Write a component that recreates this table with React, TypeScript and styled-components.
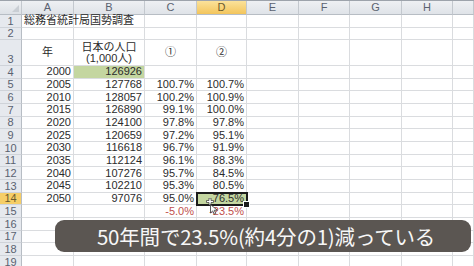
import React from "react";
import styled, {createGlobalStyle} from "styled-components";

const GlobalStyle = createGlobalStyle`
  html, body {
    margin: 0;
    padding: 0;
    background: #ffffff;
  }
  body {
    width: 474px;
    height: 266px;
    overflow: hidden;
    font-family: "Liberation Sans", "Noto Sans CJK JP", sans-serif;
  }
`

type CellData = {
    text?: React.ReactNode
    align?: 'left' | 'right' | 'center'
    fill?: string
    color?: string
    selected?: boolean
    spill?: boolean
}

const columns = ['A', 'B', 'C', 'D', 'E', 'F', 'G', 'H', '']

const data: [string, string, string, string][] = [
    ['2005', '127768', '100.7%', '100.7%'],
    ['2010', '128057', '100.2%', '100.9%'],
    ['2015', '126890', '99.1%', '100.0%'],
    ['2020', '124100', '97.8%', '97.8%'],
    ['2025', '120659', '97.2%', '95.1%'],
    ['2030', '116618', '96.7%', '91.9%'],
    ['2035', '112124', '96.1%', '88.3%'],
    ['2040', '107276', '95.7%', '84.5%'],
    ['2045', '102210', '95.3%', '80.5%'],
]

const buildRows = (): CellData[][] => {
    const rows: CellData[][] = []
    rows.push([{text: '総務省統計局国勢調査', align: 'left', spill: true}])
    rows.push([])
    rows.push([
        {text: '年', align: 'center'},
        {text: <>日本の人口<br/>(1,000人)</>, align: 'center'},
        {text: '①', align: 'center'},
        {text: '②', align: 'center'},
    ])
    rows.push([{text: '2000', align: 'right'}, {text: '126926', align: 'right', fill: '#c4d6a0'}])
    data.forEach(r => {
        rows.push(r.map(t => ({text: t, align: 'right'})))
    })
    rows.push([
        {text: '2050', align: 'right'},
        {text: '97076', align: 'right'},
        {text: '95.0%', align: 'right'},
        {text: '76.5%', align: 'right', fill: '#c4d6a0', selected: true},
    ])
    rows.push([
        {},
        {},
        {text: '-5.0%', align: 'right', color: '#c0504d'},
        {text: '-23.5%', align: 'right', color: '#c0504d'},
    ])
    for (let i = 16; i <= 19; i++) rows.push([])
    return rows
}

// excel cell cursor (white cross) with a small arrow
const Cursor = () => (
    <CursorWrap>
        <svg width="12" height="17" viewBox="0 0 12 17">
            <path d="M3 0h2v2.5h2.5v2H5V7H3V4.5H0.5v-2H3z" fill="#fff" stroke="#333" strokeWidth="0.7"/>
            <path d="M4.5 6.5v8.5l2.2-2.1 1.6 3.3 1.5-0.7-1.6-3.2 3.1-0.1z" fill="#fff" stroke="#333" strokeWidth="0.8"/>
        </svg>
    </CursorWrap>
)

export default function App() {
    const rows = buildRows()
    return (
        <Screen>
            <GlobalStyle/>
            <Sheet>
                <Corner/>
                {columns.map((c, i) => (
                    <ColHeader key={'h' + i} $active={c === 'D'}>{c}</ColHeader>
                ))}
                {rows.map((row, r) => (
                    <React.Fragment key={'r' + r}>
                        <RowHeader $active={r + 1 === 14}>{r + 1}</RowHeader>
                        {columns.map((_, c) => {
                            const cell = row[c] || {}
                            return (
                                <Cell
                                    key={c}
                                    $align={cell.align || 'left'}
                                    $fill={cell.fill}
                                    $color={cell.color}
                                    $selected={cell.selected}
                                    $spill={cell.spill}
                                >
                                    {cell.text}
                                </Cell>
                            )
                        })}
                    </React.Fragment>
                ))}
            </Sheet>
            <Cursor/>
            <Caption>50年間で23.5%(約4分の1)減っている</Caption>
        </Screen>
    )
}

const Screen = styled.div`
  position: relative;
  width: 474px;
  height: 266px;
  overflow: hidden;
  border-top: 1px solid #9da3ab;
  box-sizing: border-box;
`

const Sheet = styled.div`
  display: grid;
  grid-template-columns: 22px 52px 71px 52px 50px 52px 51px 52px 51px 1fr;
  grid-template-rows: 14px 12.5px 12.5px 26px repeat(16, 12.67px);
  font-size: 11px;
  color: #2b2b2b;
`

const Corner = styled.div`
  background: linear-gradient(#eef0f3, #dde1e6);
  border-right: 1px solid #c3c8ce;
  border-bottom: 1px solid #b7bdc4;
  position: relative;
  &::after {
    content: "";
    position: absolute;
    right: 2px;
    bottom: 2px;
    border-left: 7px solid transparent;
    border-bottom: 7px solid #c9ced4;
  }
`

const ColHeader = styled.div<{ $active?: boolean }>`
  display: flex;
  align-items: center;
  justify-content: center;
  font-size: 11px;
  line-height: 11px;
  color: ${p => p.$active ? '#6b5a2c' : '#5a6270'};
  background: ${p => p.$active ? 'linear-gradient(#fbe29a, #f3c55c)' : 'linear-gradient(#eef0f3, #dfe3e8)'};
  border-right: 1px solid #c3c8ce;
  border-bottom: 1px solid #b7bdc4;
  box-sizing: border-box;
`

const RowHeader = styled.div<{ $active?: boolean }>`
  display: flex;
  align-items: flex-end;
  justify-content: center;
  font-size: 11px;
  line-height: 11px;
  color: ${p => p.$active ? '#6b5a2c' : '#5a6270'};
  background: ${p => p.$active ? '#f6ce67' : '#e6e9ee'};
  border-right: 1px solid #b7bdc4;
  border-bottom: 1px solid #cfd3d9;
  box-sizing: border-box;
`

const Cell = styled.div<{ $align: string, $fill?: string, $color?: string, $selected?: boolean, $spill?: boolean }>`
  position: relative;
  display: flex;
  align-items: center;
  justify-content: ${p => p.$align === 'right' ? 'flex-end' : p.$align === 'center' ? 'center' : 'flex-start'};
  text-align: center;
  padding: 0 2px;
  font-family: "Liberation Sans", "Noto Sans CJK JP", sans-serif;
  font-size: 11px;
  line-height: 11px;
  white-space: nowrap;
  z-index: ${p => p.$spill ? 1 : 'auto'};
  color: ${p => p.$color || '#2b2b2b'};
  background: ${p => p.$fill || '#ffffff'};
  border-right: 1px solid #dadcdf;
  border-bottom: 1px solid #dadcdf;
  box-sizing: border-box;
  ${p => p.$selected && `
    outline: 2px solid #1c1c1c;
    outline-offset: -1px;
    z-index: 2;
    &::after {
      content: "";
      position: absolute;
      right: -4px;
      bottom: -4px;
      width: 5px;
      height: 5px;
      background: #1c1c1c;
      border: 1px solid #fff;
    }
  `}
`

const CursorWrap = styled.div`
  position: absolute;
  left: 206px;
  top: 197px;
  z-index: 5;
  line-height: 0;
`

const Caption = styled.div`
  position: absolute;
  left: 55px;
  top: 219px;
  width: 416px;
  height: 32px;
  border-radius: 9px;
  background: #5b5652;
  color: #f7f7f7;
  display: flex;
  align-items: center;
  justify-content: center;
  padding-left: 6px;
  box-sizing: border-box;
  font-family: "Noto Sans CJK JP", sans-serif;
  font-size: 20.5px;
  letter-spacing: -0.2px;
  z-index: 6;
`
